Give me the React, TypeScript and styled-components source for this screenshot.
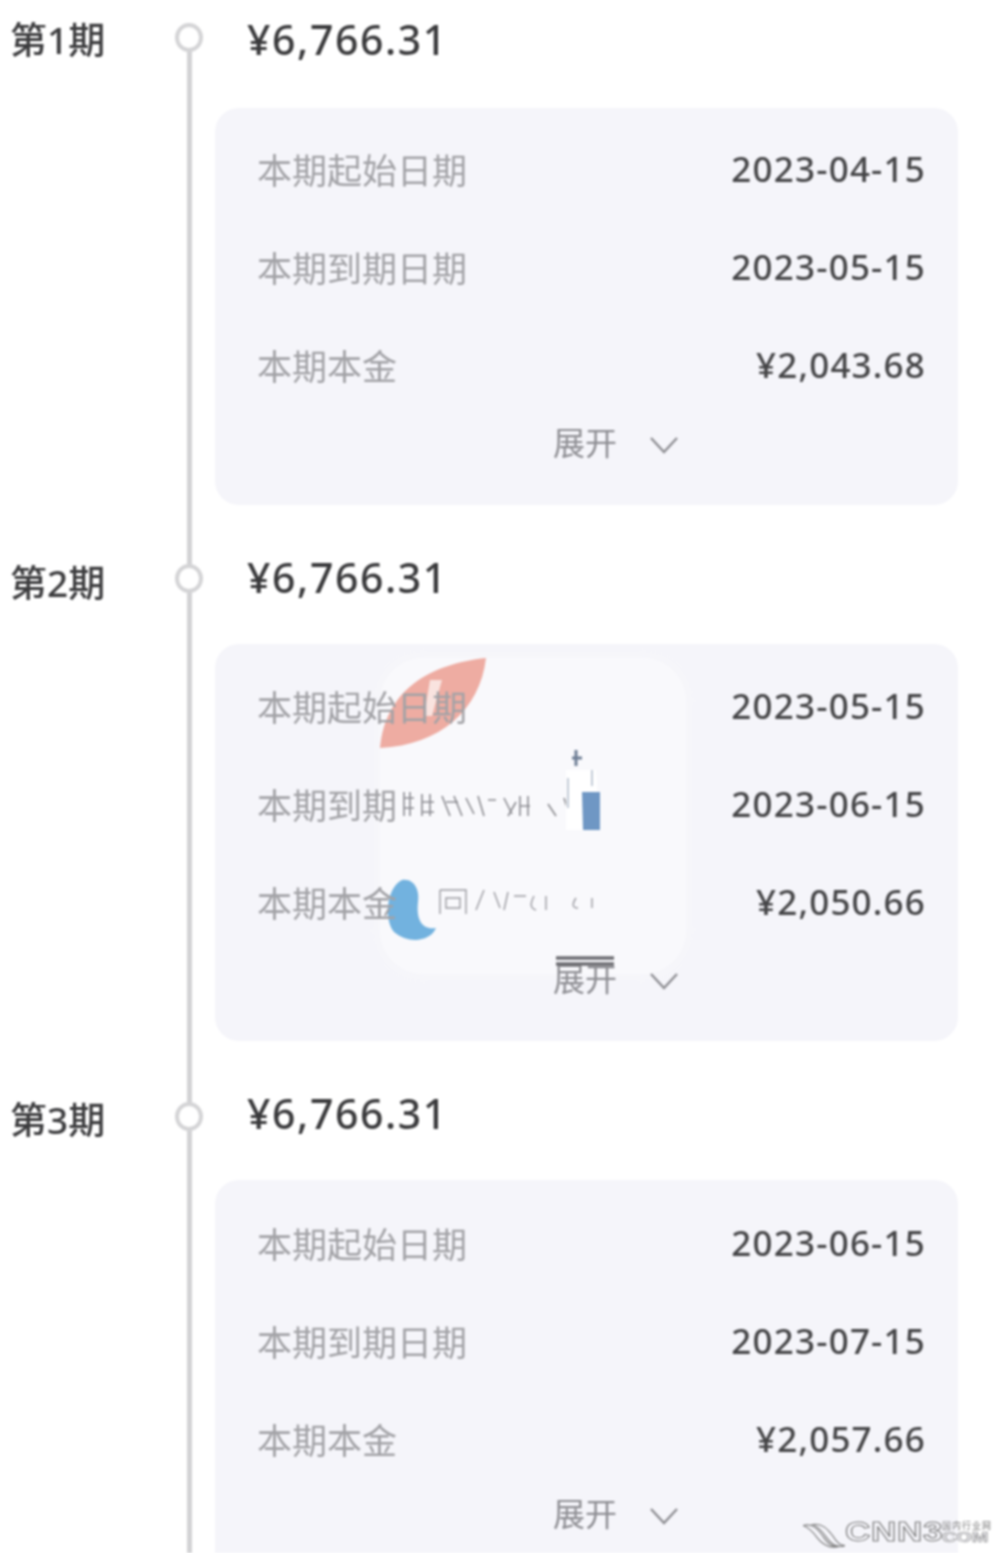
import React from "react";
import styled, { createGlobalStyle } from "styled-components";

const periods = [
  {
    name: "第1期",
    labelTop: 16,
    dotTop: 23,
    headHeight: 108,
    cardTop: 11,
    toggleLift: 0,
    rows: [
      ["本期起始日期", "2023-04-15"],
      ["本期到期日期", "2023-05-15"],
      ["本期本金", "¥2,043.68"],
    ],
  },
  {
    name: "第2期",
    labelTop: 21,
    dotTop: 26,
    headHeight: 106,
    cardTop: 12,
    toggleLift: 1,
    stamped: true,
    rows: [
      ["本期起始日期", "2023-05-15"],
      ["本期到期日期", "2023-06-15"],
      ["本期本金", "¥2,050.66"],
    ],
  },
  {
    name: "第3期",
    labelTop: 22,
    dotTop: 28,
    headHeight: 106,
    cardTop: 13,
    toggleLift: 3,
    rows: [
      ["本期起始日期", "2023-06-15"],
      ["本期到期日期", "2023-07-15"],
      ["本期本金", "¥2,057.66"],
    ],
  },
];

export default function App() {
  return (
    <>
      <GlobalStyle />
      <Page>
        {periods.map((period, i) => (
          <Period key={period.name}>
            <PeriodName $top={period.labelTop}>{period.name}</PeriodName>
            <Rail $top={period.dotTop} $first={i === 0}>
              <Dot />
            </Rail>
            <Body>
              <Head $height={period.headHeight}>
                <Amount>¥6,766.31</Amount>
              </Head>
              <Card $top={period.cardTop}>
                {period.stamped && (
                  <Stamp>
                    <svg width="306" height="316" viewBox="0 0 306 316">
                      <path
                        d="M106 0C50 6 5 32 0 90C60 87 100 52 106 0Z"
                        fill="#eeaca2"
                      />
                      <path d="M50 22L62 22L52 58L44 58Z" fill="#f9e3df" />
                      <path
                        d="M22 222C6 230 4 262 14 274C28 286 50 284 56 270C42 272 36 262 38 244C40 232 34 220 22 222Z"
                        fill="#72b2df"
                      />
                    </svg>
                  </Stamp>
                )}
                {period.rows.map(([label, value]) => (
                  <Row key={label}>
                    <Label>{label}</Label>
                    <Value>{value}</Value>
                  </Row>
                ))}
                <Toggle $lift={period.toggleLift}>
                  <span>展开</span>
                  <Chevron width="30" height="20" viewBox="0 0 30 20">
                    <path
                      d="M2 3L15 17L28 3"
                      fill="none"
                      stroke="#8e8e93"
                      strokeWidth="2.4"
                    />
                  </Chevron>
                </Toggle>
                {period.stamped && (
                  <Smudge>
                    <svg width="306" height="330" viewBox="0 0 306 330">
                      <rect x="22" y="122" width="190" height="50" fill="#f9f9fc" />
                      <g stroke="#8b8b90" strokeWidth="1.6" fill="none">
                        <path d="M24 134V158M30 134V158M24 140H34M24 150H34" />
                        <path d="M42 136V158M50 136V158M42 144H54M42 154H54" />
                        <path d="M62 138L70 158M74 138L82 158M66 144H78" />
                        <path d="M86 140L94 156M98 138L104 158M108 142H116" />
                        <path d="M124 140L132 156M136 144L128 158" />
                        <path d="M140 138V158M148 138V158M140 148H150" />
                        <path d="M168 146L176 158M184 140L190 158" />
                      </g>
                      <g stroke="#9a9aa0" strokeWidth="1.4" fill="none">
                        <path d="M104 232L96 252M114 234L120 250M128 234L124 252M134 238H146" />
                        <path d="M154 238C150 246 150 250 156 252M166 238V252M196 240C192 246 192 250 198 250M212 240V250" />
                        <path d="M60 232V256M60 232H86V256M66 240H80V250H66Z" />
                      </g>
                      <path d="M196 92V108M192 100H202" stroke="#6f7f96" strokeWidth="3" />
                      <path d="M186 112H216L220 172H186Z" fill="#ffffff" />
                      <path d="M202 134H220V172H203Z" fill="#6f97c4" />
                      <path d="M188 120V150M212 112V128" stroke="#a9b5c6" strokeWidth="1.4" />
                      <path
                        d="M176 300H234M176 306H234"
                        stroke="#6d6d72"
                        strokeWidth="3.5"
                      />
                    </svg>
                  </Smudge>
                )}
              </Card>
            </Body>
          </Period>
        ))}
        <SiteMark>
          <svg width="42" height="27" viewBox="0 0 44 27">
            <g fill="none" stroke="#7d7d7d" strokeWidth="1.2">
              <path d="M0 3C10 0 16 7 22 16C26 22 32 26 38 25C30 27 22 25 15 16C10 9 6 5 0 3Z" />
              <path d="M10 2C20 0 26 7 32 15C35 20 39 24 44 24C36 27 30 23 25 16C20 9 16 4 10 2Z" />
            </g>
          </svg>
          <SiteName>CNN3</SiteName>
          <SiteSuffix>
            <small>国内行业网</small>
            <b>COM</b>
          </SiteSuffix>
        </SiteMark>
      </Page>
    </>
  );
}

const GlobalStyle = createGlobalStyle`
  html,
  body {
    margin: 0;
    background: #fff;
  }
`;

const Page = styled.div`
  position: relative;
  width: 1000px;
  height: 1553px;
  overflow: hidden;
  filter: blur(0.9px);
  background: #fff;
  font-family: "Noto Sans", "Noto Sans CJK SC", sans-serif;
`;

const Period = styled.section`
  display: grid;
  grid-template-columns: 175px 28px 1fr;
  padding-right: 42px;
`;

const PeriodName = styled.div<{ $top: number }>`
  padding: ${(p) => p.$top}px 0 0 10px;
  font-size: 37px;
  line-height: 48px;
  font-weight: 500;
  color: #3c3c3e;
`;

const Rail = styled.div<{ $top: number; $first: boolean }>`
  padding-top: ${(p) => p.$top}px;
  background: linear-gradient(#d2d2d4, #d2d2d4) no-repeat center
    ${(p) => (p.$first ? "37px" : "0")} / 5px 100%;
`;

const Dot = styled.div`
  box-sizing: border-box;
  width: 28px;
  height: 29px;
  border: 4px solid #d4d4d6;
  border-radius: 50%;
  background: #fff;
`;

const Body = styled.div`
  padding: 0 0 33px 12px;
`;

const Head = styled.div<{ $height: number }>`
  height: ${(p) => p.$height}px;
  padding-left: 32px;
`;

const Amount = styled.div`
  font-size: 41px;
  line-height: 78px;
  font-weight: 500;
  letter-spacing: 1.6px;
  color: #3a3a3c;
`;

const Card = styled.div<{ $top: number }>`
  position: relative;
  box-sizing: border-box;
  height: 397px;
  padding: ${(p) => p.$top}px 32px 0 42px;
  border-radius: 24px;
  background: #f5f5fa;
`;

const Row = styled.div`
  position: relative;
  display: flex;
  align-items: center;
  justify-content: space-between;
  height: 98px;
`;

const Label = styled.span`
  font-size: 35px;
  color: #a2a2a6;
`;

const Value = styled.span`
  font-size: 35px;
  font-weight: 500;
  letter-spacing: 1.2px;
  color: #454547;
`;

const Toggle = styled.div<{ $lift: number }>`
  position: relative;
  display: flex;
  align-items: center;
  gap: 32px;
  height: 56px;
  margin: -${(p) => p.$lift}px 0 0 296px;
  font-size: 32px;
  color: #8e8e93;
`;

const Chevron = styled.svg`
  margin-top: 7px;
`;

const Stamp = styled.div`
  position: absolute;
  top: 14px;
  left: 165px;
  width: 306px;
  height: 316px;
  border-radius: 44px;
  background: #f9f9fc;
  box-shadow: 0 0 14px 1px #f8f8fb;
`;

const Smudge = styled.div`
  position: absolute;
  top: 14px;
  left: 165px;
  width: 306px;
  height: 330px;
  pointer-events: none;
`;

const SiteMark = styled.div`
  position: absolute;
  right: 10px;
  bottom: 4px;
  display: flex;
  align-items: flex-start;
  color: #7d7d7d;
`;

const SiteName = styled.span`
  width: 97px;
  font-family: "Liberation Sans", sans-serif;
  font-size: 27px;
  line-height: 20px;
  font-weight: 700;
  letter-spacing: 0.5px;
  color: #f5f5fa;
  -webkit-text-stroke: 1px #7d7d7d;
  transform: scaleX(1.3);
  transform-origin: left center;
`;

const SiteSuffix = styled.span`
  display: flex;
  flex-direction: column;
  width: 48px;
  font-family: "Liberation Sans", "Noto Sans CJK SC", sans-serif;

  small {
    font-size: 9px;
    line-height: 9px;
    letter-spacing: 1px;
    white-space: nowrap;
  }

  b {
    font-size: 14px;
    line-height: 12px;
    color: #f5f5fa;
    -webkit-text-stroke: 0.6px #7d7d7d;
    transform: scaleX(1.42);
    transform-origin: left center;
  }
`;
